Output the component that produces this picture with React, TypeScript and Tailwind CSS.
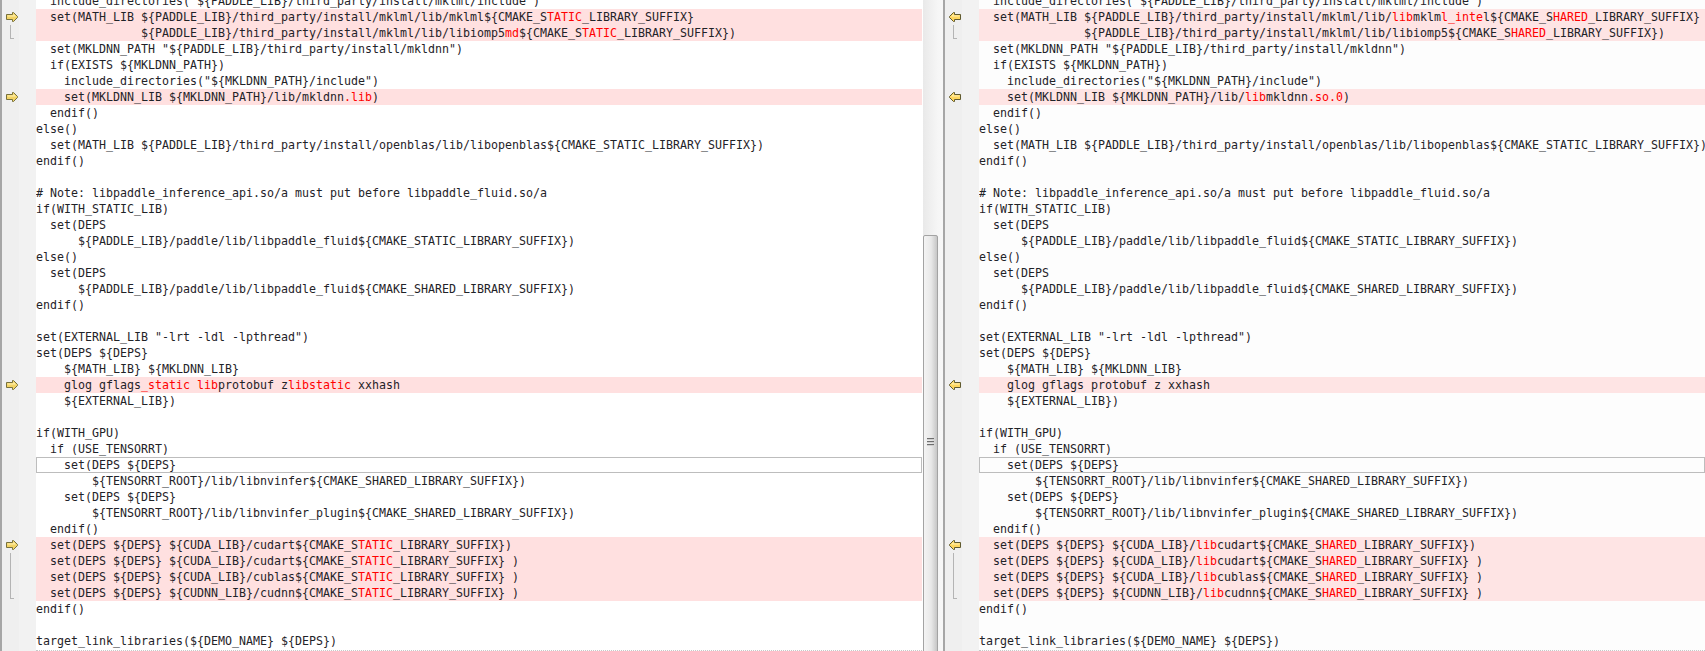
import React from "react";

type Row = { l: string; r?: string; pink?: boolean; mark?: "arrow" | "mid" | "end"; box?: boolean };

const STATIC_L = "${CMAKE_S‹TATIC›_LIBRARY_SUFFIX}";
const SHARED_R = "${CMAKE_S‹HARED›_LIBRARY_SUFFIX}";

const rows: Row[] = [
  { l: '  include_directories("${PADDLE_LIB}/third_party/install/mklml/include")' },
  {
    l: "  set(MATH_LIB ${PADDLE_LIB}/third_party/install/mklml/lib/mklml" + STATIC_L,
    r: "  set(MATH_LIB ${PADDLE_LIB}/third_party/install/mklml/lib/‹lib›mklm‹l_inte›l" + SHARED_R,
    pink: true,
    mark: "arrow",
  },
  {
    l: "               ${PADDLE_LIB}/third_party/install/mklml/lib/libiomp5‹md›" + STATIC_L + ")",
    r: "               ${PADDLE_LIB}/third_party/install/mklml/lib/libiomp5" + SHARED_R + ")",
    pink: true,
    mark: "end",
  },
  { l: '  set(MKLDNN_PATH "${PADDLE_LIB}/third_party/install/mkldnn")' },
  { l: "  if(EXISTS ${MKLDNN_PATH})" },
  { l: '    include_directories("${MKLDNN_PATH}/include")' },
  {
    l: "    set(MKLDNN_LIB ${MKLDNN_PATH}/lib/mkldnn‹.lib›)",
    r: "    set(MKLDNN_LIB ${MKLDNN_PATH}/lib/‹lib›mkldnn‹.so.0›)",
    pink: true,
    mark: "arrow",
  },
  { l: "  endif()" },
  { l: "else()" },
  { l: "  set(MATH_LIB ${PADDLE_LIB}/third_party/install/openblas/lib/libopenblas${CMAKE_STATIC_LIBRARY_SUFFIX})" },
  { l: "endif()" },
  { l: "" },
  { l: "# Note: libpaddle_inference_api.so/a must put before libpaddle_fluid.so/a" },
  { l: "if(WITH_STATIC_LIB)" },
  { l: "  set(DEPS" },
  { l: "      ${PADDLE_LIB}/paddle/lib/libpaddle_fluid${CMAKE_STATIC_LIBRARY_SUFFIX})" },
  { l: "else()" },
  { l: "  set(DEPS" },
  { l: "      ${PADDLE_LIB}/paddle/lib/libpaddle_fluid${CMAKE_SHARED_LIBRARY_SUFFIX})" },
  { l: "endif()" },
  { l: "" },
  { l: 'set(EXTERNAL_LIB "-lrt -ldl -lpthread")' },
  { l: "set(DEPS ${DEPS}" },
  { l: "    ${MATH_LIB} ${MKLDNN_LIB}" },
  {
    l: "    glog gflags‹_static lib›protobuf z‹libstatic› xxhash",
    r: "    glog gflags protobuf z xxhash",
    pink: true,
    mark: "arrow",
  },
  { l: "    ${EXTERNAL_LIB})" },
  { l: "" },
  { l: "if(WITH_GPU)" },
  { l: "  if (USE_TENSORRT)" },
  { l: "    set(DEPS ${DEPS}", box: true },
  { l: "        ${TENSORRT_ROOT}/lib/libnvinfer${CMAKE_SHARED_LIBRARY_SUFFIX})" },
  { l: "    set(DEPS ${DEPS}" },
  { l: "        ${TENSORRT_ROOT}/lib/libnvinfer_plugin${CMAKE_SHARED_LIBRARY_SUFFIX})" },
  { l: "  endif()" },
  {
    l: "  set(DEPS ${DEPS} ${CUDA_LIB}/cudart" + STATIC_L + ")",
    r: "  set(DEPS ${DEPS} ${CUDA_LIB}/‹lib›cudart" + SHARED_R + ")",
    pink: true,
    mark: "arrow",
  },
  {
    l: "  set(DEPS ${DEPS} ${CUDA_LIB}/cudart" + STATIC_L + " )",
    r: "  set(DEPS ${DEPS} ${CUDA_LIB}/‹lib›cudart" + SHARED_R + " )",
    pink: true,
    mark: "mid",
  },
  {
    l: "  set(DEPS ${DEPS} ${CUDA_LIB}/cublas" + STATIC_L + " )",
    r: "  set(DEPS ${DEPS} ${CUDA_LIB}/‹lib›cublas" + SHARED_R + " )",
    pink: true,
    mark: "mid",
  },
  {
    l: "  set(DEPS ${DEPS} ${CUDNN_LIB}/cudnn" + STATIC_L + " )",
    r: "  set(DEPS ${DEPS} ${CUDNN_LIB}/‹lib›cudnn" + SHARED_R + " )",
    pink: true,
    mark: "end",
  },
  { l: "endif()" },
  { l: "" },
  { l: "target_link_libraries(${DEMO_NAME} ${DEPS})" },
];

function Arrow({ flip }: { flip?: boolean }) {
  return (
    <svg width="12" height="10" viewBox="0 0 12 10" className={flip ? "-scale-x-100" : ""}>
      <path
        d="M0.5 2.5H6.5V0.5H7.5L11.5 4.5V5.5L7.5 9.5H6.5V7.5H0.5Z"
        fill={flip ? "#ffd75e" : "#f3d465"}
        stroke={flip ? "#5f5a30" : "#77713c"}
        strokeWidth="1"
      />
      <path d="M1.5 3.5H7.5V2L10 4.5H1.5Z" fill="#fff0b0" />
    </svg>
  );
}

function Gutter({ mark, flip }: { mark?: Row["mark"]; flip?: boolean }) {
  return (
    <div className="w-[34px] h-4 shrink-0 bg-[linear-gradient(90deg,#efefef_17px,#f2f2f2_17px)]">
      {mark === "arrow" && (
        <div className="pl-1 pt-[3px]">
          <Arrow flip={flip} />
        </div>
      )}
      {mark === "mid" && <div className="ml-2 w-1 h-4 border-l border-[#b4b4b4]" />}
      {mark === "end" && <div className="ml-2 w-1 h-[14px] border-l border-b border-[#b4b4b4]" />}
    </div>
  );
}

function Code({ text }: { text: string }) {
  return (
    <>
      {text.split(/‹|›/).map((part, i) =>
        i % 2 === 1 ? (
          <span key={i} className="text-[#ff0000]">
            {part}
          </span>
        ) : (
          <span key={i}>{part}</span>
        ),
      )}
    </>
  );
}

function Pane({ side }: { side: "l" | "r" }) {
  const right = side === "r";
  return (
    <div
      className={`min-w-0 flex flex-col -mt-[7px] border-l-2 border-[#a6a6a6] h-[658px] ${
        right ? "flex-1 bg-[#fdfdfd]" : "w-[923px] shrink-0 bg-white pr-px"
      }`}
    >
      {rows.map((row, i) => (
        <div key={i} className="flex h-4 shrink-0">
          <Gutter mark={row.mark} flip={right} />
          <div
            className={`flex-1 min-w-0 h-4 overflow-hidden whitespace-pre leading-4 text-[11.63px] text-[#1f2328] [font-family:'DejaVu_Sans_Mono',monospace] ${
              row.pink ? (right ? "bg-[#fee4e4]" : "bg-[#ffe0e0]") : ""
            } ${row.box ? "shadow-[inset_0_0_0_1px_#bdbdbd]" : ""}`}
          >
            <Code text={right && row.r ? row.r : row.l} />
          </div>
        </div>
      ))}
      <div className="flex flex-1">
        <div className="w-[34px] shrink-0 bg-[linear-gradient(90deg,#efefef_17px,#f2f2f2_17px)]" />
        <div className="flex-1 border-b border-dotted border-[#c8c8c8]" />
      </div>
    </div>
  );
}

function Scrollbar() {
  return (
    <div className="w-5 shrink-0 h-[651px] overflow-hidden bg-[linear-gradient(90deg,#e9e9e9,#f6f6f6_75%,#f7f7f7)]">
      <div className="h-[235px]" />
      <div className="w-[15px] h-[430px] rounded-t-[2px] border border-[#a3a3a3] bg-[linear-gradient(90deg,#f4f4f4,#e8e8e8_55%,#c6c6c6)] pt-[202px] pl-[3px]">
        <div className="flex flex-col gap-px w-[7px]">
          <div className="h-[2px] bg-[#6e6e6e] border-b border-[#cfcfcf]" />
          <div className="h-[2px] bg-[#6e6e6e] border-b border-[#cfcfcf]" />
          <div className="h-[2px] bg-[#6e6e6e] border-b border-[#cfcfcf]" />
        </div>
      </div>
    </div>
  );
}

export default function App() {
  return (
    <div className="w-[1705px] h-[651px] overflow-hidden flex bg-white">
      <Pane side="l" />
      <Scrollbar />
      <Pane side="r" />
    </div>
  );
}
